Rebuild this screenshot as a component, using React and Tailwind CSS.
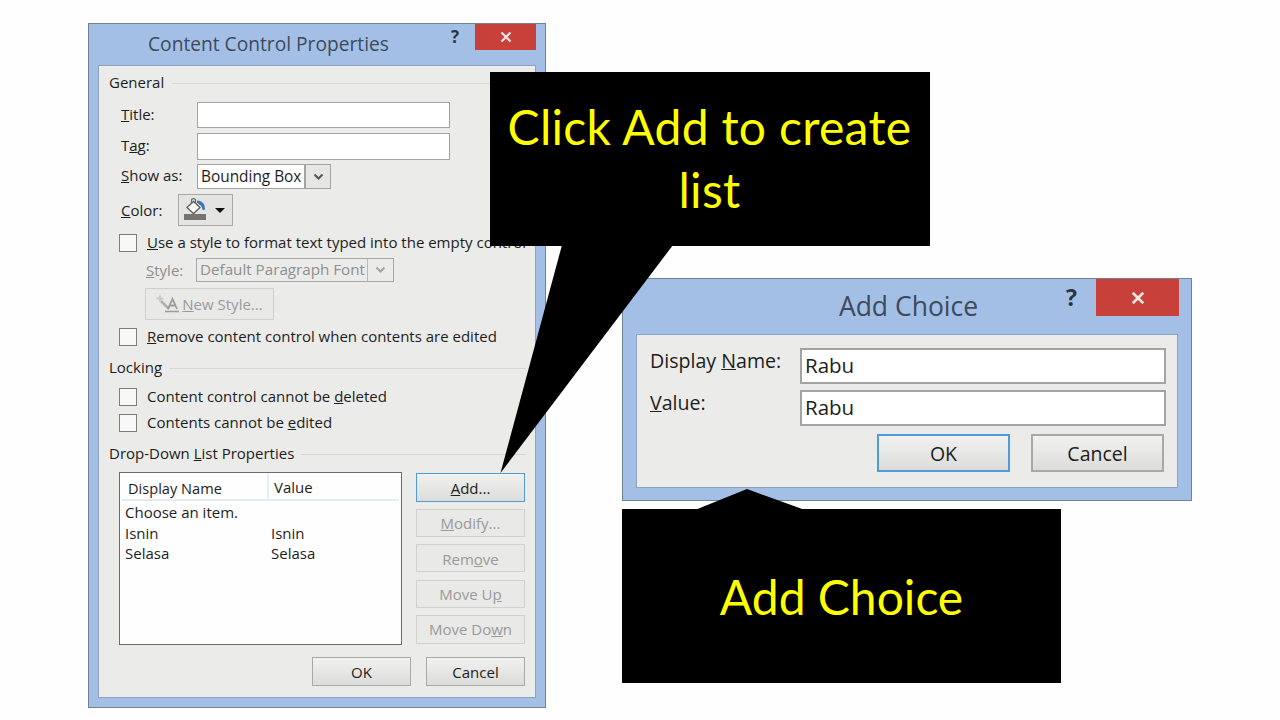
const ui = "font-['Open_Sans','Noto_Sans',sans-serif]";

function Close({ className, size }) {
  return (
    <div className={`flex items-center justify-center bg-[#c8403a] ${className}`}>
      <svg width={size} height={size} viewBox="0 0 12 12">
        <path d="M1.5 1.5L10.5 10.5M10.5 1.5L1.5 10.5" stroke="#f6e6e4" strokeWidth="2.2" fill="none" />
      </svg>
    </div>
  );
}

function Section({ children, className, lineClass }) {
  return (
    <div className={`flex items-center h-[18px] pl-[10px] pr-[9px] text-[15px] leading-none text-[#1d1d1d] ${className}`}>
      <span className="whitespace-nowrap mt-[-2px]">{children}</span>
      <div className={`flex-1 h-[1px] bg-[#d6d6d4] ${lineClass}`} />
    </div>
  );
}

function Check({ children, className }) {
  return (
    <div className={`flex items-center h-[18px] pl-[20px] ${className}`}>
      <div className="w-[18px] h-[18px] shrink-0 border border-[#7d7d7d] bg-[#f8f8f8]" />
      <span className="ml-[10px] mt-[-2px] text-[15px] leading-none text-[#1d1d1d] whitespace-nowrap">{children}</span>
    </div>
  );
}

function Btn({ children, className, dim, focus }) {
  const tone = dim
    ? "border-[#d0d0ce] bg-[#e9e9e7] text-[#9a9a9a]"
    : focus
    ? "border-[#4f9ad8] bg-gradient-to-b from-[#f1f1f0] to-[#dcdcda] text-[#1d1d1d]"
    : "border-[#a8a8a6] bg-gradient-to-b from-[#f1f1f0] to-[#dcdcda] text-[#1d1d1d]";
  return (
    <div className={`flex items-center justify-center border leading-none whitespace-nowrap ${tone} ${className}`}>
      {children}
    </div>
  );
}

function Chevron({ color }) {
  return (
    <svg width="11" height="8" viewBox="0 0 11 8">
      <path d="M1.5 1.5L5.5 5.5L9.5 1.5" stroke={color} strokeWidth="2" fill="none" />
    </svg>
  );
}

function Bucket() {
  return (
    <svg width="26" height="26" viewBox="0 0 26 26">
      <path d="M2 17h22v6H2z" fill="#77736e" />
      <path d="M5 10.5L11.5 4.5L18 10.5L11.5 16.5Z" fill="#fbfbfb" stroke="#5d5d5d" strokeWidth="1.3" />
      <path d="M9.5 6.5V3.5c0-2.6 4-2.6 4 0V7" fill="none" stroke="#6a6a6a" strokeWidth="1.2" />
      <path d="M15 3.5c4.500 0 8 3 8 8c0 2-2.500 2-2.800 0c-.3-2-1-3-5.200-5.500Z" fill="#3f79b5" />
    </svg>
  );
}

function Wand() {
  return (
    <svg width="24" height="20" viewBox="0 0 24 20">
      <path d="M4 0l1.200 3.300 3.300 1.200-3.300 1.200-1.200 3.300-1.200-3.300-3.300-1.200 3.300-1.200Z" fill="#c9c9c7" />
      <path d="M5 7L13 15" stroke="#b0b0ae" strokeWidth="2.500" fill="none" />
      <path d="M12 15L16.500 5L21 15M13.500 11.500H19.500" stroke="#9c9c9a" strokeWidth="1.800" fill="none" />
      <path d="M9 17.500H23" stroke="#9c9c9a" strokeWidth="1.500" fill="none" />
    </svg>
  );
}

function Dialog1() {
  return (
    <div className="absolute left-[88px] top-[23px] w-[458px] h-[685px] box-border border border-[#6e8299] bg-[#a3bfe6] flex flex-col font-medium">
      <div className="h-[41px] shrink-0 relative flex items-center">
        <span className="ml-[59px] mt-[-1px] text-[19.2px] font-normal leading-none text-[#3d4a5c] whitespace-nowrap">Content Control Properties</span>
        <span className="absolute left-[362px] top-[4px] text-[17px] font-bold leading-none text-[#2c3440]">?</span>
        <Close className="absolute left-[386px] top-0 w-[61px] h-[26px]" size={12} />
      </div>
      <div className="mx-[9px] h-[633px] box-border border border-[#8ea3bd] bg-[#ebebe9] flex flex-col">
        <Section className="mt-[8px]" lineClass="ml-[8px]">General</Section>

        <div className="flex items-center h-[26px] mt-[10px]">
          <span className="w-[98px] pl-[22px] mt-[-2px] text-[15px] leading-none text-[#1d1d1d]"><u>T</u>itle:</span>
          <div className="w-[253px] h-[26px] box-border border border-[#a3a3a1] bg-white" />
        </div>
        <div className="flex items-center h-[27px] mt-[5px]">
          <span className="w-[98px] pl-[22px] mt-[-2px] text-[15px] leading-none text-[#1d1d1d]">T<u>a</u>g:</span>
          <div className="w-[253px] h-[27px] box-border border border-[#a3a3a1] bg-white" />
        </div>
        <div className="flex items-start h-[25px] mt-[4px]">
          <span className="w-[98px] pl-[22px] mt-[4px] text-[15px] leading-none text-[#1d1d1d]"><u>S</u>how as:</span>
          <div className="w-[134px] h-[25px] box-border border border-[#a3a3a1] bg-white flex">
            <span className="flex-1 pl-[3px] text-[15.400px] leading-[24px] text-[#1d1d1d] whitespace-nowrap">Bounding Box</span>
            <div className="w-[26px] box-border border-l-2 border-[#a3a3a1] bg-[#e6e6e4] flex items-center justify-center"><Chevron color="#555" /></div>
          </div>
        </div>
        <div className="flex items-center h-[32px] mt-[5px]">
          <span className="w-[79px] pl-[22px] text-[15px] leading-none text-[#1d1d1d]"><u>C</u>olor:</span>
          <div className="w-[55px] h-[32px] box-border border border-[#a8a8a6] bg-[#e4e4e2] flex items-center pl-[3px]">
            <Bucket />
            <div className="ml-[7px] w-0 h-0 border-x-[5px] border-t-[5px] border-x-transparent border-t-[#111]" />
          </div>
        </div>
        <Check className="mt-[8px]"><u>U</u>se a style to format text typed into the empty control</Check>

        <div className="flex items-center h-[24px] mt-[6px]">
          <span className="w-[97px] pl-[47px] text-[15px] leading-none text-[#8f8f8f]"><u>S</u>tyle:</span>
          <div className="w-[198px] h-[24px] box-border border border-[#a8a8a6] bg-[#ebebe9] flex">
            <span className="flex-1 pl-[3px] text-[15.200px] leading-[21px] text-[#8f8f8f] whitespace-nowrap">Default Paragraph Font</span>
            <div className="w-[26px] box-border border-l border-[#b8b8b6] flex items-center justify-center"><Chevron color="#a5a5a5" /></div>
          </div>
        </div>
        <div className="flex items-center h-[32px] mt-[6px] pl-[46px]">
          <Btn dim className="w-[129px] h-[32px] text-[15px]">
            <Wand />
            <span className="ml-[2px]"><u>N</u>ew Style...</span>
          </Btn>
        </div>
        <Check className="mt-[8px]"><u>R</u>emove content control when contents are edited</Check>

        <Section className="mt-[13px]" lineClass="ml-[7px]">Locking</Section>
        <Check className="mt-[11px]">Content control cannot be <u>d</u>eleted</Check>
        <Check className="mt-[8px]">Contents cannot be <u>e</u>dited</Check>
        <Section className="mt-[13px]" lineClass="ml-[7px]">Drop-Down <u>L</u>ist Properties</Section>

        <div className="flex mt-[9px] pl-[20px]">
          <div className="w-[283px] h-[173px] box-border border border-[#6c6c6c] bg-[#fefefe] text-[15px] leading-none text-[#1d1d1d]">
            <div className="flex h-[28px] mx-[2px] border-b-2 border-[#e3ebf5] items-center">
              <span className="w-[145px] pl-[6px] pt-[4px] text-[14.600px]">Display Name</span>
              <span className="pl-[5px] pt-[3px] h-full flex items-center border-l-2 border-[#e9eef5]">Value</span>
            </div>
            <div className="flex h-[20px] items-center mt-[1px] pl-[5px]">Choose an item.</div>
            <div className="flex h-[20px] items-center mt-[1px] pl-[5px]"><span className="w-[146px]">Isnin</span><span>Isnin</span></div>
            <div className="flex h-[20px] items-center pl-[5px]"><span className="w-[146px]">Selasa</span><span>Selasa</span></div>
          </div>
          <div className="ml-[14px] flex flex-col w-[109px] text-[15px]">
            <Btn focus className="h-[29px] mt-[1px] pt-[2px]"><span><u>A</u>dd...</span></Btn>
            <Btn dim className="h-[28px] mt-[7px]"><span><u>M</u>odify...</span></Btn>
            <Btn dim className="h-[28px] mt-[7px] pt-[2px]"><span>Rem<u>o</u>ve</span></Btn>
            <Btn dim className="h-[28px] mt-[8px]"><span>Move U<u>p</u></span></Btn>
            <Btn dim className="h-[29px] mt-[7px]"><span>Move Do<u>w</u>n</span></Btn>
          </div>
        </div>
        <div className="flex mt-[12px] pl-[213px] text-[15px]">
          <Btn className="w-[99px] h-[29px] pt-[2px]">OK</Btn>
          <Btn className="w-[99px] h-[29px] pt-[2px] ml-[15px]">Cancel</Btn>
        </div>
      </div>
    </div>
  );
}

function Dialog2() {
  return (
    <div className="absolute left-[622px] top-[278px] w-[570px] h-[223px] box-border border border-[#6e8299] bg-[#a3bfe6] flex flex-col font-medium">
      <div className="h-[55px] shrink-0 relative flex items-center justify-center">
        <span className="ml-[3px] text-[26.5px] font-normal leading-none text-[#3d4a5c] whitespace-nowrap">Add Choice</span>
        <span className="absolute left-[443px] top-[7px] text-[23px] font-bold leading-none text-[#2c3440]">?</span>
        <Close className="absolute left-[473px] top-0 w-[83px] h-[37px]" size={14} />
      </div>
      <div className="mx-[13px] h-[154px] box-border border border-[#8ea3bd] bg-[#ebebe9] flex flex-col text-[#1d1d1d]">
        <div className="flex items-center h-[36px] mt-[13px]">
          <span className="w-[163px] pl-[13px] mt-[-10px] text-[19.600px] leading-none whitespace-nowrap">Display <u>N</u>ame:</span>
          <div className="w-[366px] h-[36px] box-border border-2 border-[#a3a3a1] bg-white pl-[3px] text-[20.500px] leading-[31px] text-[#1d1d1d]">Rabu</div>
        </div>
        <div className="flex items-center h-[36px] mt-[6px]">
          <span className="w-[163px] pl-[13px] mt-[-10px] text-[19.600px] leading-none"><u>V</u>alue:</span>
          <div className="w-[366px] h-[36px] box-border border-2 border-[#a3a3a1] bg-white pl-[3px] text-[20.500px] leading-[31px] text-[#1d1d1d]">Rabu</div>
        </div>
        <div className="flex mt-[8px] pl-[240px] text-[19.500px]">
          <Btn focus className="w-[133px] h-[38px] border-2 pt-[2px]">OK</Btn>
          <Btn className="w-[133px] h-[38px] border-2 pt-[2px] ml-[21px]">Cancel</Btn>
        </div>
      </div>
    </div>
  );
}

function Callout({ className, children, textClass }) {
  return (
    <div className={`absolute bg-black flex items-center justify-center text-center text-[#ffff00] font-['Lato','Open_Sans',sans-serif] ${className}`}>
      <div className={textClass}>{children}</div>
    </div>
  );
}

export default function App() {
  return (
    <div className={`relative w-[1280px] h-[720px] overflow-hidden bg-[#fefefe] ${ui}`}>
      <Dialog1 />
      <Dialog2 />
      <svg className="absolute left-0 top-0 pointer-events-none" width="1280" height="720">
        <polygon points="562,245 673,245 500.5,473" fill="#000" />
        <polygon points="695,510 747,489 805,510" fill="#000" />
      </svg>
      <Callout className="left-[490px] top-[72px] w-[440px] h-[174px]" textClass="text-[48px] leading-[63px] tracking-[0.3px] mt-[-2px] mr-[1px]">
        Click Add to create<br />list
      </Callout>
      <Callout className="left-[622px] top-[509px] w-[439px] h-[174px]" textClass="text-[48px] leading-none mt-[2px]">
        Add Choice
      </Callout>
    </div>
  );
}
